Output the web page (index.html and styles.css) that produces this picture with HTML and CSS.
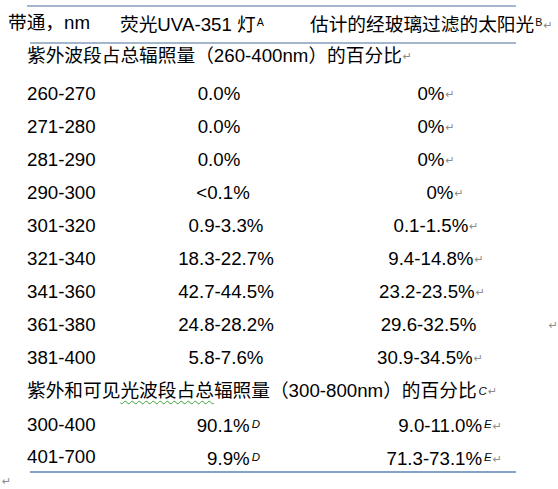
FILE: index.html
```html
<!DOCTYPE html>
<html lang="zh">
<head>
<meta charset="utf-8">
<title>带通表</title>
<link rel="stylesheet" href="styles.css">
</head>
<body>
<div class="doc">
  <div class="rule rule-top"></div>
  <div class="head">
    <div class="h1">带通，nm</div>
    <div class="h2">荧光UVA-351 灯<span class="sa">A</span></div>
    <div class="h3">估计的经玻璃过滤的太阳光<span class="sa">B</span><span class="pm">↵</span></div>
  </div>
  <div class="rule rule-mid"></div>
  <div class="sub sub1">紫外波段占总辐照量（260-400nm）的百分比<span class="pm">↵</span></div>

  <div class="data"><div class="c1">260-270</div><div class="c2 l7">0.0%</div><div class="c3">0%<span class="pm">↵</span></div><div class="c4"></div></div>
  <div class="data"><div class="c1">271-280</div><div class="c2 l7">0.0%</div><div class="c3">0%<span class="pm">↵</span></div><div class="c4"></div></div>
  <div class="data"><div class="c1">281-290</div><div class="c2 l7">0.0%</div><div class="c3">0%<span class="pm">↵</span></div><div class="c4"></div></div>
  <div class="data"><div class="c1">290-300</div><div class="c2 l3">&lt;0.1%</div><div class="c3 shift">0%<span class="pm">↵</span></div><div class="c4"></div></div>
  <div class="data"><div class="c1">301-320</div><div class="c2">0.9-3.3%</div><div class="c3">0.1-1.5%<span class="pm">↵</span></div><div class="c4"></div></div>
  <div class="data"><div class="c1">321-340</div><div class="c2">18.3-22.7%</div><div class="c3">9.4-14.8%<span class="pm">↵</span></div><div class="c4"></div></div>
  <div class="data"><div class="c1">341-360</div><div class="c2">42.7-44.5%</div><div class="c3 l4">23.2-23.5%<span class="pm">↵</span></div><div class="c4"></div></div>
  <div class="data"><div class="c1">361-380</div><div class="c2">24.8-28.2%</div><div class="c3 bare">29.6-32.5%</div><div class="c4"><span class="pm">↵</span></div></div>
  <div class="data"><div class="c1">381-400</div><div class="c2">5.8-7.6%</div><div class="c3 l6">30.9-34.5%<span class="pm">↵</span></div><div class="c4"></div></div>

  <div class="sub sub2">紫外和可见<span class="wavy">光波段占总</span>辐照量（300-800nm）的百分比<span class="sc">C</span><span class="pm">↵</span></div>

  <div class="data"><div class="c1">300-400</div><div class="c2 right">90.1%<span class="sd">D</span></div><div class="c3 right">9.0-11.0%<span class="sd">E</span><span class="pm">↵</span></div><div class="c4"></div></div>
  <div class="data last"><div class="c1">401-700</div><div class="c2 right">9.9%<span class="sd">D</span></div><div class="c3 right">71.3-73.1%<span class="sd">E</span><span class="pm">↵</span></div><div class="c4"></div></div>
  <div class="rule rule-bottom"></div>
  <div class="tail"><span class="pm">↵</span></div>
</div>
</body>
</html>
```

FILE: styles.css
```css
html, body {
  margin: 0;
  padding: 0;
  background: #ffffff;
}

body {
  font-family: "Liberation Sans", Arial, "Noto Sans CJK SC", sans-serif;
  font-size: 18.7px;
  color: #000000;
}

.doc {
  width: 558px;
  height: 489px;
  overflow: hidden;
  padding-top: 5px;
  box-sizing: border-box;
}

.rule {
  height: 2px;
}

.rule-top {
  margin-left: 27px;
  width: 489px;
  background: #a3b6ce;
}

.rule-mid {
  margin-left: 30px;
  width: 486px;
  background: #a3b6ce;
}

.rule-bottom {
  margin-left: 30px;
  width: 486px;
  background: #84a2c6;
}

.head {
  display: flex;
  height: 35px;
  line-height: 31px;
  padding-left: 8px;
  white-space: nowrap;
}

.h1 {
  width: 112px;
  flex: none;
}

.h2 {
  width: 190px;
  flex: none;
}

.h3 {
  flex: none;
}

.sub {
  padding-left: 27px;
  white-space: nowrap;
}

.sub1 {
  height: 24px;
  line-height: 24px;
  margin-bottom: 9px;
}

.sub2 {
  height: 34px;
  line-height: 34px;
}

.data {
  display: grid;
  grid-template-columns: 160px 132px 240px 26px;
  height: 33px;
  line-height: 33px;
  white-space: nowrap;
}

.data.last {
  height: 30px;
  line-height: 32px;
}

.c1 {
  padding-left: 27px;
}

.c2 {
  text-align: center;
}

.c2.l7 {
  padding-right: 14px;
}

.c2.l3 {
  padding-right: 6px;
}

.c3 {
  text-align: center;
  padding-left: 48px;
}

.c3.shift {
  padding-left: 66px;
}

.c3.l4 {
  padding-right: 8px;
}

.c3.l6 {
  padding-right: 12px;
}

.c3.bare {
  padding-right: 15px;
}

.c2.right {
  text-align: right;
  padding-right: 32px;
}

.c3.right {
  text-align: right;
  padding-right: 30px;
}

.c4 {
  text-align: right;
}

.sa {
  font-size: 10.7px;
  vertical-align: 5px;
  margin-left: 1px;
}

.sc,
.sd {
  font-size: 11.5px;
  font-style: italic;
  margin-left: 2px;
}

.sc {
  vertical-align: 2px;
}

.sd {
  vertical-align: 4px;
}

.pm {
  font-family: "DejaVu Sans", sans-serif;
  font-size: 11px;
  color: #8c8c8c;
  vertical-align: 2px;
  margin-left: 1px;
}

.wavy {
  text-decoration: underline wavy #3aa53a;
  text-decoration-thickness: 1px;
  text-underline-offset: 3px;
}

.tail {
  padding-left: 1px;
  margin-top: 1px;
  line-height: 14px;
}
```
